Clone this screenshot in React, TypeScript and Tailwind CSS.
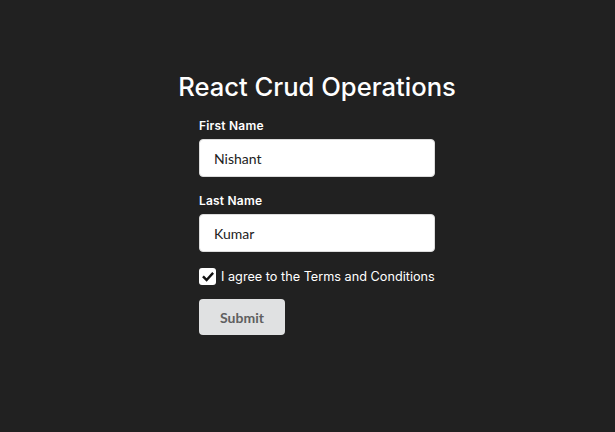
import React from "react";

export default function App() {
  return (
    <div className="min-h-[432px] w-full bg-[#212121] flex flex-col items-center pl-[19px]">
      <h1 className="mt-[70px] text-[25.6px] leading-[34px] font-medium text-white font-['Inter','Open_Sans',sans-serif]">
        React Crud Operations
      </h1>
      <form className="w-[236px] mt-[14px] flex flex-col" onSubmit={(e) => e.preventDefault()}>
        <label className="text-[12px] leading-[16px] font-semibold text-white tracking-[0.2px] font-['Inter',sans-serif]">
          First Name
        </label>
        <input
          defaultValue="Nishant"
          className="mt-[5px] h-[38px] w-full rounded-[4px] bg-white px-[14px] text-[14px] text-[#212121] outline-none border border-[#dcdcdc] font-['Lato',sans-serif]"
        />
        <label className="mt-[16px] text-[12px] leading-[16px] font-semibold text-white tracking-[0.2px] font-['Inter',sans-serif]">
          Last Name
        </label>
        <input
          defaultValue="Kumar"
          className="mt-[5px] h-[38px] w-full rounded-[4px] bg-white px-[14px] text-[14px] text-[#212121] outline-none border border-[#dcdcdc] font-['Lato',sans-serif]"
        />
        <div className="mt-[16px] flex items-center gap-[5px]">
          <span className="w-[17px] h-[17px] shrink-0 rounded-[3px] bg-white flex items-center justify-center">
            <svg width="12" height="12" viewBox="0 0 12 12">
              <path d="M1.8 6.2 L4.6 9 L10.3 2.8" fill="none" stroke="#111" strokeWidth="2.4" strokeLinecap="square" />
            </svg>
          </span>
          <span className="whitespace-nowrap text-[12.7px] leading-[17px] text-white font-['Inter',sans-serif]">
            I agree to the Terms and Conditions
          </span>
        </div>
        <button
          type="submit"
          className="mt-[14px] w-[86px] h-[36px] rounded-[4px] bg-[#e0e1e2] text-[#5f5f5f] text-[14px] font-bold font-['Lato',sans-serif]"
        >
          Submit
        </button>
      </form>
    </div>
  );
}
